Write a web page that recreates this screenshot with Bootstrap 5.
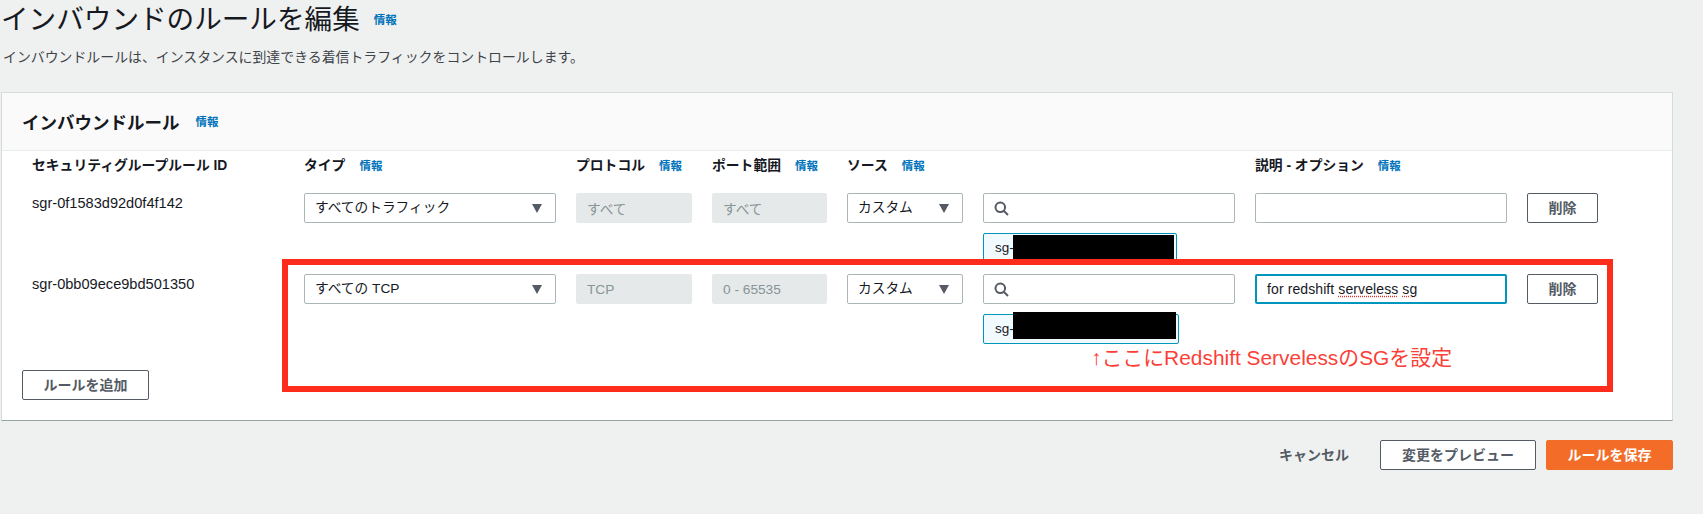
<!DOCTYPE html>
<html lang="ja">
<head>
    <meta charset="UTF-8">
    <meta name="viewport" content="width=device-width, initial-scale=1">
    <title>インバウンドのルールを編集</title>
    <link href="https://cdn.jsdelivr.net/npm/bootstrap@5.3.0/dist/css/bootstrap.min.css" rel="stylesheet">
    <style>
        html, body { height: 100%; }
        body {
            background: #eff1f0;
            color: #16191f;
            font-family: "Liberation Sans", "Noto Sans CJK JP", sans-serif;
            font-size: 14px;
            overflow: hidden;
        }
        .page-wrap { padding: 0 30px 0 1px; }
        .page-title { font-size: 27.6px; line-height: 34px; font-weight: 400; margin: 3px 2px 0 0; }
        .info-link { color: #0073bb; font-size: 11.5px; font-weight: 700; text-decoration: none; }
        .page-sub { font-size: 13.9px; line-height: 20px; margin: 10px 0 25px 2px; color: #3f4449; }
        .rules-card { position: relative; border: 1px solid #d5dbdb; border-bottom-color: #98a5a6; border-radius: 0; background: #fff; }
        .rules-head { height: 58px; padding: 3px 20px 0; background: #fafafa; border-bottom: 1px solid #eaeded; border-radius: 0 !important; }
        .rules-head h2 { font-size: 17.5px; font-weight: 700; margin: 0; }
        .rules-body { padding: 0 0 20px 30px; }
        .rule-grid { display: grid; grid-template-columns: 252px 252px 116px 115px 116px 252px 252px 71px; column-gap: 20px; }
        .head-grid { height: 30px; align-items: center; margin-bottom: 12px; font-weight: 700; font-size: 13.8px; }
        .head-grid .info-link { margin-left: 14px; }
        .rule-row { height: 70px; margin-bottom: 11px; }
        .rule-id { line-height: 20px; font-size: 14.6px; }
        .aws-field, .aws-field:disabled, .aws-field:focus {
            height: 30px; min-height: 30px; padding: 0 10px; font-size: 13.7px; line-height: 28px;
            border: 1px solid #aab7b8; border-radius: 2px; color: #16191f; box-shadow: none; background-color: #fff;
        }
        .aws-field:disabled { background: #e6e9e9; border-color: #e6e9e9; color: #879596; opacity: 1; }
        .aws-select, .aws-select:focus {
            appearance: none;
            background-image: url("data:image/svg+xml,%3Csvg xmlns='http://www.w3.org/2000/svg' viewBox='0 0 10 9'%3E%3Cpath fill='%23545b64' d='M0 0h10L5 9z'/%3E%3C/svg%3E");
            background-repeat: no-repeat; background-size: 10px 9px; background-position: right 13px center;
        }
        .search-box { position: relative; }
        .search-box svg { position: absolute; left: 11px; top: 8px; }
        .search-box input { padding-left: 32px; }
        .focus-field { border: 2px solid #0095bd; padding: 0 10px; height: 30px; line-height: 26px; border-radius: 2px; font-size: 14px; letter-spacing: .1px; }
        .spell-err { text-decoration: underline dotted #e0352b; text-underline-offset: 2px; }
        .sg-token { position: relative; height: 30px; margin-top: 10px; padding-left: 11px; line-height: 28px; background: #f1faff; border: 1px solid #0095bd; border-radius: 2px; font-size: 13.5px; }
        .token-a { width: 194px; }
        .token-b { width: 196px; }
        .sg-mask { position: absolute; background: #000; left: 29px; }
        .mask-a { width: 161px; top: 1px; height: 26px; }
        .mask-b { width: 163px; top: -3px; height: 27px; }
        .aws-btn { height: 30px; padding: 0; border: 1px solid #545b64; border-radius: 2px; background: #fff; color: #545b64; font-weight: 700; font-size: 14px; line-height: 28px; }
        .add-btn { width: 127px; margin: 26px 0 0 -10px; display: block; }
        .redbox { position: absolute; left: 280px; top: 166px; width: 1331px; height: 133px; border: 6px solid #fe2c1b; pointer-events: none; }
        .red-note { position: absolute; left: 1089px; top: 252px; color: #fb3f38; font-size: 20.9px; line-height: 26px; white-space: nowrap; }
        .page-foot { margin-top: 19px; }
        .cancel-link { color: #545b64; font-weight: 700; font-size: 14px; margin-right: 31px; text-decoration: none; }
        .preview-btn { width: 156px; margin-right: 10px; }
        .save-btn { width: 127px; background: #f36d28; border-color: #f36d28; color: #fff; }
    </style>
</head>
<body>

<div class="page-wrap">
    <div class="d-flex align-items-end gap-2">
        <h1 class="page-title">インバウンドのルールを編集</h1>
        <a href="#" class="info-link mb-2 ms-1">情報</a>
    </div>
    <p class="page-sub">インバウンドルールは、インスタンスに到達できる着信トラフィックをコントロールします。</p>

    <div class="card rules-card">
        <div class="card-header rules-head d-flex align-items-center">
            <h2>インバウンドルール</h2>
            <a href="#" class="info-link ms-3">情報</a>
        </div>
        <div class="rules-body">
            <div class="rule-grid head-grid">
                <div>セキュリティグループルール ID</div>
                <div>タイプ<a href="#" class="info-link">情報</a></div>
                <div>プロトコル<a href="#" class="info-link">情報</a></div>
                <div class="text-nowrap">ポート範囲<a href="#" class="info-link">情報</a></div>
                <div>ソース<a href="#" class="info-link">情報</a></div>
                <div></div>
                <div>説明 - オプション<a href="#" class="info-link">情報</a></div>
                <div></div>
            </div>

            <div class="rule-grid rule-row">
                <div class="rule-id">sgr-0f1583d92d0f4f142</div>
                <select class="form-select aws-field aws-select"><option>すべてのトラフィック</option></select>
                <input class="form-control aws-field" value="すべて" disabled>
                <input class="form-control aws-field" value="すべて" disabled>
                <select class="form-select aws-field aws-select"><option>カスタム</option></select>
                <div>
                    <div class="search-box">
                        <svg width="15" height="15" viewBox="0 0 15 15" fill="none" stroke="#545b64" stroke-width="2"><circle cx="6.3" cy="6.3" r="4.8"/><path d="M10 10l4 4"/></svg>
                        <input class="form-control aws-field">
                    </div>
                    <div class="sg-token token-a">sg-<span class="sg-mask mask-a"></span></div>
                </div>
                <input class="form-control aws-field">
                <button class="btn aws-btn">削除</button>
            </div>

            <div class="rule-grid rule-row">
                <div class="rule-id">sgr-0bb09ece9bd501350</div>
                <select class="form-select aws-field aws-select"><option>すべての TCP</option></select>
                <input class="form-control aws-field" value="TCP" disabled>
                <input class="form-control aws-field" value="0 - 65535" disabled>
                <select class="form-select aws-field aws-select"><option>カスタム</option></select>
                <div>
                    <div class="search-box">
                        <svg width="15" height="15" viewBox="0 0 15 15" fill="none" stroke="#545b64" stroke-width="2"><circle cx="6.3" cy="6.3" r="4.8"/><path d="M10 10l4 4"/></svg>
                        <input class="form-control aws-field">
                    </div>
                    <div class="sg-token token-b">sg-<span class="sg-mask mask-b"></span></div>
                </div>
                <div class="focus-field">for redshift <span class="spell-err">serveless</span> <span class="spell-err">sg</span></div>
                <button class="btn aws-btn">削除</button>
            </div>

            <button class="btn aws-btn add-btn">ルールを追加</button>
        </div>

        <div class="redbox"></div>
        <div class="red-note">↑ここにRedshift ServelessのSGを設定</div>
    </div>

    <div class="page-foot d-flex justify-content-end align-items-center">
        <a href="#" class="cancel-link">キャンセル</a>
        <button class="btn aws-btn preview-btn">変更をプレビュー</button>
        <button class="btn aws-btn save-btn">ルールを保存</button>
    </div>
</div>

<script src="https://cdn.jsdelivr.net/npm/bootstrap@5.3.0/dist/js/bootstrap.bundle.min.js"></script>
</body>
</html>
